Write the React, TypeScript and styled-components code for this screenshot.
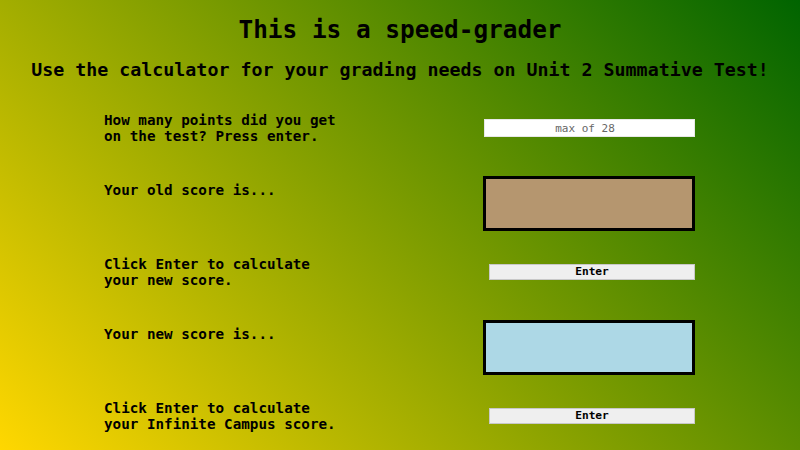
import React from 'react'
import styled, { createGlobalStyle } from 'styled-components'

const GlobalStyle = createGlobalStyle`
    html, body {
        margin: 0;
        padding: 0;
    }
    body {
        width: 800px;
        height: 450px;
        overflow: hidden;
        font-family: 'DejaVu Sans Mono', monospace;
        font-weight: bold;
        color: #000;
        background: linear-gradient(45deg, gold, darkgreen);
    }
`

const Page = styled.main`
    display: flex;
    flex-direction: column;
    align-items: center;
    padding-top: 14px;
`

const Title = styled.h1`
    margin: 0;
    font-size: 24.4px;
    line-height: 32px;
`

const Subtitle = styled.h3`
    margin: 12px 0 0;
    font-size: 18.3px;
    line-height: 24px;
`

const Form = styled.div`
    align-self: stretch;
    display: grid;
    grid-template-columns: 240px 1fr;
    grid-template-rows: 64px 80px 64px 80px 64px;
    padding: 0 105px 0 104px;
    margin-top: 30px;
`

const Label = styled.div<{ $offset?: number }>`
    font-size: 14.25px;
    line-height: 16px;
    padding-top: ${(p) => p.$offset ?? 0}px;
`

const Cell = styled.div`
    display: flex;
    justify-content: flex-end;
    align-items: flex-start;
`

const PointsInput = styled.input`
    box-sizing: border-box;
    width: 211px;
    height: 18px;
    margin-top: 7px;
    border: 1px solid #e8e8e8;
    background: #fff;
    font-family: 'DejaVu Sans Mono', monospace;
    font-size: 11px;
    text-align: center;
    padding: 0 9px 0 0;
    &::placeholder {
        color: #666;
    }
`

const ScoreBox = styled.div<{ $fill: string }>`
    box-sizing: border-box;
    width: 212px;
    height: 55px;
    border: 3px solid #000;
    background: ${(p) => p.$fill};
`

const EnterButton = styled.button`
    box-sizing: border-box;
    width: 206px;
    height: 16px;
    margin-top: 8px;
    padding: 0;
    border: 1px solid #c8c8c8;
    background: #efefef;
    font-family: 'DejaVu Sans Mono', monospace;
    font-weight: bold;
    font-size: 11.2px;
    line-height: 14px;
    color: #000;
`

export default function App() {
    return (
        <>
            <GlobalStyle />
            <Page>
                <Title>This is a speed-grader</Title>
                <Subtitle>Use the calculator for your grading needs on Unit 2 Summative Test!</Subtitle>
                <Form>
                    <Label>How many points did you get on the test? Press enter.</Label>
                    <Cell>
                        <PointsInput type="text" placeholder="max of 28" />
                    </Cell>

                    <Label $offset={6}>Your old score is...</Label>
                    <Cell>
                        <ScoreBox $fill="#b5966f" />
                    </Cell>

                    <Label>Click Enter to calculate your new score.</Label>
                    <Cell>
                        <EnterButton>Enter</EnterButton>
                    </Cell>

                    <Label $offset={6}>Your new score is...</Label>
                    <Cell>
                        <ScoreBox $fill="lightblue" />
                    </Cell>

                    <Label>Click Enter to calculate your Infinite Campus score.</Label>
                    <Cell>
                        <EnterButton>Enter</EnterButton>
                    </Cell>
                </Form>
            </Page>
        </>
    )
}
